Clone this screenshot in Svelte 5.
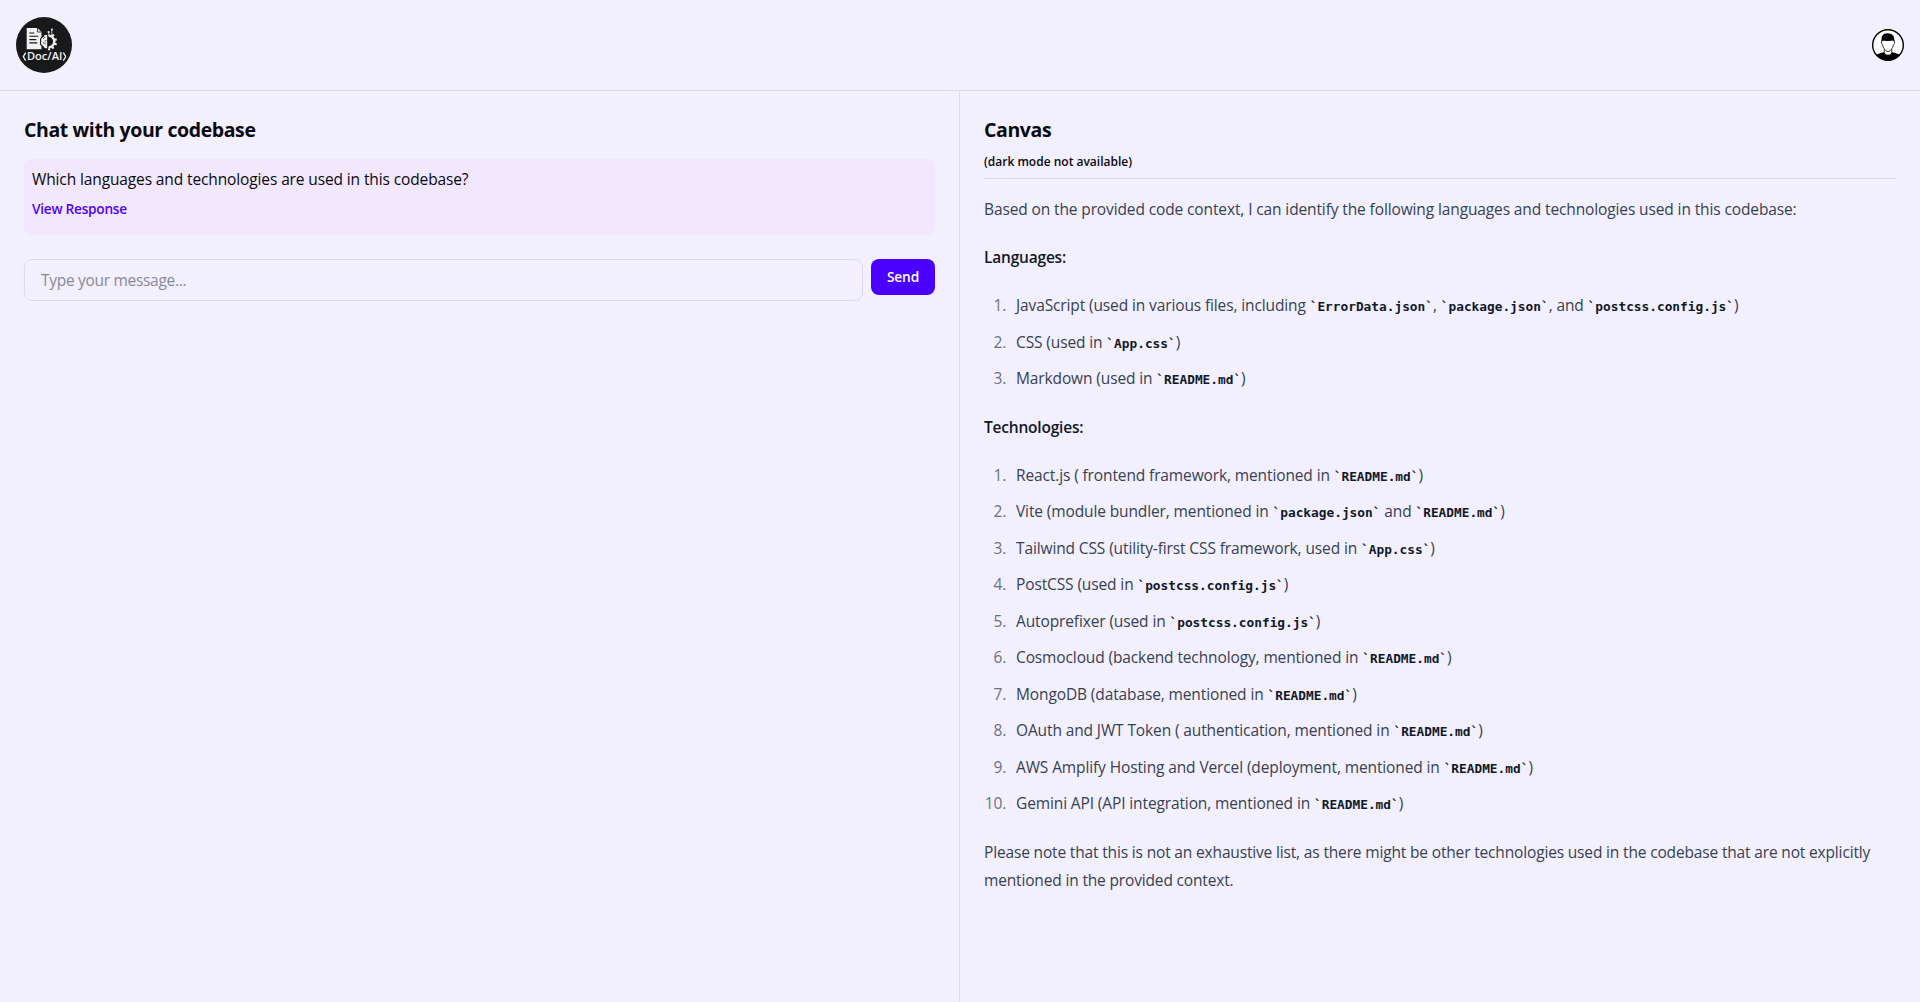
<script>
  // Chat page: prompt history on the left, rendered answer on the right.
  let message = "";

  const history = [{ id: 1, prompt: "Which languages and technologies are used in this codebase?" }];

  // Parts at odd indexes are inline code.
  const split = (text) => text.split("`");

  const languages = [
    "JavaScript (used in various files, including `ErrorData.json`, `package.json`, and `postcss.config.js`)",
    "CSS (used in `App.css`)",
    "Markdown (used in `README.md`)",
  ];

  const technologies = [
    "React.js ( frontend framework, mentioned in `README.md`)",
    "Vite (module bundler, mentioned in `package.json` and `README.md`)",
    "Tailwind CSS (utility-first CSS framework, used in `App.css`)",
    "PostCSS (used in `postcss.config.js`)",
    "Autoprefixer (used in `postcss.config.js`)",
    "Cosmocloud (backend technology, mentioned in `README.md`)",
    "MongoDB (database, mentioned in `README.md`)",
    "OAuth and JWT Token ( authentication, mentioned in `README.md`)",
    "AWS Amplify Hosting and Vercel (deployment, mentioned in `README.md`)",
    "Gemini API (API integration, mentioned in `README.md`)",
  ];

  const sections = [
    { title: "Languages:", items: languages },
    { title: "Technologies:", items: technologies },
  ];
</script>

<div class="page">
  <header>
    <svg class="logo" viewBox="0 0 56 56" aria-label="Doc/AI">
      <circle cx="28" cy="28" r="28" fill="#17191b" />
      <path d="M10.700 11h10.800l4 4v17.300H10.700z" fill="#f1f1f1" />
      <path d="M21.500 11v4h4" fill="none" stroke="#17191b" stroke-width="0.800" />
      <path d="M13.300 16h5M13.300 19.300h9M13.300 22.600h7M13.300 25.900h8" stroke="#17191b" stroke-width="1.100" />
      <!-- right half gear -->
      <path d="M32.500 18.800a5.800 5.800 0 0 1 0 11.600" fill="none" stroke="#f1f1f1" stroke-width="2.400" />
      <path d="M36 19.500l1.800-2M38 23l2.700-.6M38 26.500l2.700 1M36 29.500l1.500 2.200M33 30v3.200" stroke="#f1f1f1" stroke-width="2.200" />
      <!-- left half brain -->
      <path d="M31.800 17.500c-2.500-1-4.500.5-4.800 2.200-2 .6-3 2.500-2.200 4.500-1 2.300 0 4.500 2 5 .6 2.200 2.800 3.300 5 2.500z" fill="#f1f1f1" stroke="#17191b" stroke-width="1.200" />
      <path d="M29.500 20c-1.500 0-2 1-2 2M27 26c1.500-.5 2.500 0 2.500 1.500M30.500 23.500l-2 .7" fill="none" stroke="#17191b" stroke-width="0.700" />
      <path d="M32.800 19v-4M35.800 18v-5" stroke="#f1f1f1" stroke-width="0.800" />
      <circle cx="32.600" cy="15" r="1.100" fill="#f1f1f1" />
      <circle cx="36" cy="12.600" r="1" fill="#f1f1f1" />
      <path d="M9.700 35.600l-2.400 4 2.400 4M47.300 35.600l2.400 4-2.400 4" fill="none" stroke="#f1f1f1" stroke-width="1.300" />
      <text x="28.700" y="43.100" text-anchor="middle" textLength="35.400" lengthAdjust="spacingAndGlyphs">Doc/AI</text>
    </svg>
    <svg class="avatar" viewBox="0 0 32 32" aria-label="Account">
      <defs><clipPath id="face"><circle cx="16" cy="16" r="15.500" /></clipPath></defs>
      <circle cx="16" cy="16" r="15.400" fill="#fff" />
      <g clip-path="url(#face)">
        <path d="M3 27c1-2 5.500-2.800 9.500-4 1 2.700 6 2.700 7 0 4 1.200 8.500 2 9.500 4v6H3z" fill="#000" />
        <path d="M12.300 20v4c1.200 2.800 6.200 2.800 7.400 0v-4z" fill="#fff" stroke="#000" stroke-width="0.700" />
        <path d="M10.300 11c-1.500.3-1 4.200.2 4.500.5 3.500 3 7 5.500 7s5-3.500 5.500-7c1.200-.3 1.700-4.200.2-4.500z" fill="#fff" stroke="#000" stroke-width="0.800" />
        <path d="M10 12.800C8.500 7.500 11 4.300 15 4.300c4.500-.3 8.500 2.500 7 8.500-.3-.8-.7-1.200-1.200-1.500-3 .8-7 .7-9.600.1-.6.300-1 .7-1.200 1.400z" fill="#000" />
      </g>
      <circle cx="16" cy="16" r="15.300" fill="none" stroke="#000" stroke-width="1.400" />
    </svg>
  </header>

  <main>
    <section class="chat">
      <h2>Chat with your codebase</h2>
      {#each history as item (item.id)}
        <div class="message">
          <p>{item.prompt}</p>
          <button class="link">View Response</button>
        </div>
      {/each}
      <form on:submit|preventDefault>
        <input bind:value={message} placeholder="Type your message..." />
        <button class="send">Send</button>
      </form>
    </section>

    <section class="canvas">
      <div class="title">
        <h2>Canvas</h2>
        <small>(dark mode not available)</small>
      </div>
      <article>
        <p>Based on the provided code context, I can identify the following languages and technologies used in this codebase:</p>
        {#each sections as section}
          <p><strong>{section.title}</strong></p>
          <ol>
            {#each section.items as item}
              <li>{#each split(item) as part, i}{#if i % 2}<code>`{part}`</code>{:else}{part}{/if}{/each}</li>
            {/each}
          </ol>
        {/each}
        <p class="note">Please note that this is not an exhaustive list, as there might be other technologies used in the codebase that are not explicitly mentioned in the provided context.</p>
      </article>
    </section>
  </main>
</div>

<style>
  :global(body) { margin: 0; background: #f2effe; }
  .page { height: 100vh; display: flex; flex-direction: column; overflow: hidden; color: #0b0910;
    font-family: "Open Sans", "Noto Sans", sans-serif; font-size: 15.5px; line-height: 24px; letter-spacing: -0.12px; }
  .page * { box-sizing: border-box; }

  header { height: 91px; padding: 0 16px; border-bottom: 1px solid #ddd6fe; flex: none;
    display: flex; align-items: center; justify-content: space-between; }
  .logo { width: 56px; height: 56px; }
  .logo text { font: 600 10px "Open Sans", sans-serif; letter-spacing: 0; fill: #f1f1f1; }
  .avatar { width: 32px; height: 32px; }

  main { flex: 1; display: flex; min-height: 0; }
  section { width: 50%; padding: 24px; }
  .chat { border-right: 1px solid #ddd6fe; }
  h2 { margin: 0; padding-top: 1px; height: 28px; font-size: 19.5px; line-height: 28px; font-weight: 700; letter-spacing: -0.4px; }
  p { margin: 0; }

  .message { margin: 16px 0 24px; height: 76px; padding: 8px; border-radius: 8px; background: #f1e8fd; }
  button { border: none; font-family: inherit; cursor: pointer; }
  .link { display: block; margin-top: 8px; padding: 0; background: none; color: #5200ff;
    font-size: 13.7px; line-height: 20px; font-weight: 600; letter-spacing: -0.27px; }

  form { display: flex; align-items: flex-start; gap: 8px; }
  input { flex: 1; height: 42px; padding: 0 16px; border: 1px solid #ddd6fe; border-radius: 8px; background: transparent;
    font: inherit; letter-spacing: -0.3px; color: inherit; outline: none; }
  input::placeholder { color: #8b8997; opacity: 1; }
  .send { width: 64px; height: 36px; padding: 0 0 1px; border-radius: 8px; background: #4a00ff; color: #fff;
    font-size: 13.7px; font-weight: 600; letter-spacing: -0.1px; }

  .title { border-bottom: 1px solid #ddd6fe; height: 64px; }
  .title small { display: block; margin-top: 9px; font-size: 12px; line-height: 20px; font-weight: 600; letter-spacing: 0; }

  article { padding-top: 16px; color: #374151; line-height: 28px; }
  article p { margin-bottom: 20px; }
  article .note { letter-spacing: -0.16px; }
  strong { font-weight: 600; color: #111827; letter-spacing: -0.2px; }
  ol { margin: 0 0 20px; padding-left: 26px; }
  li { min-height: 28.5px; margin-bottom: 8px; padding-left: 6px; }
  li:last-child { margin-bottom: 0; }
  li::marker { color: #6b7280; }
  code { font-family: "DejaVu Sans Mono", monospace; font-size: 12.8px; font-weight: 700; line-height: 1;
    letter-spacing: 0; color: #111827; }
</style>
